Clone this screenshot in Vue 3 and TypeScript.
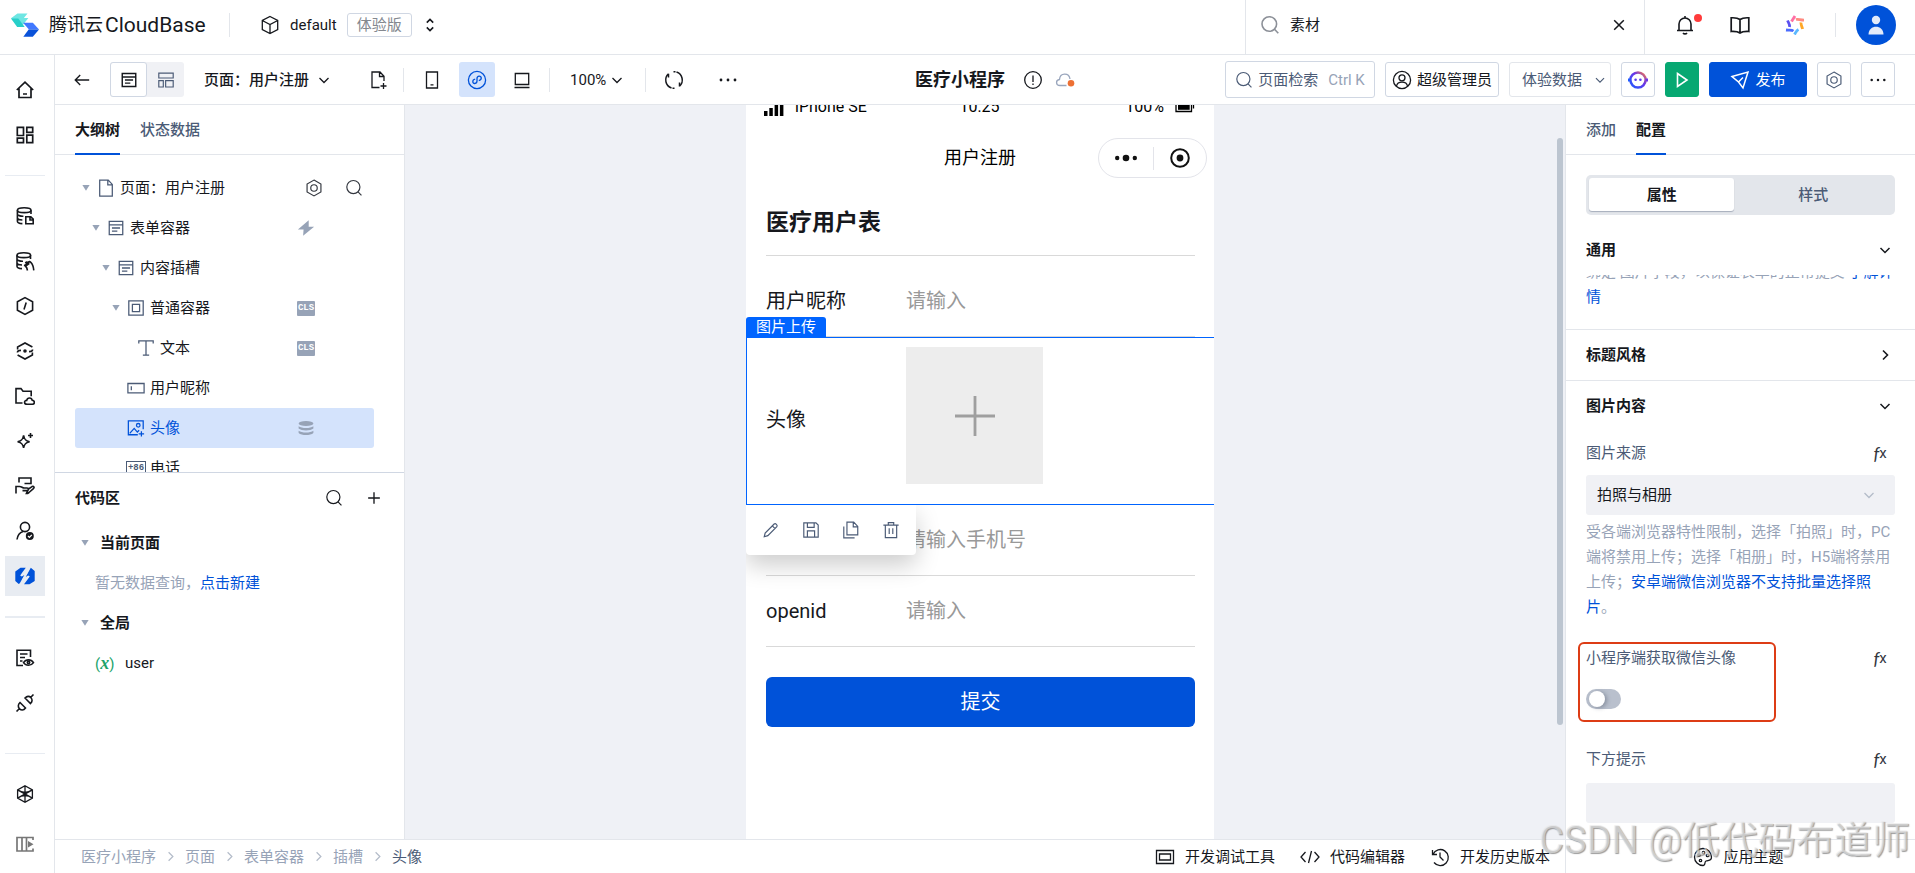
<script setup lang="ts">
import { h, ref } from 'vue'

/* Icon shapes, all drawn in a 20 x 20 box */
const shapes: Record<string, string> = {
  logo: '<g stroke="none"><path d="M4.600 1.800h7.200L9.200 5h3.200L8.600 9.800H4L0 5.200z" fill="#6fe6e3"/><path d="M0 5.400h5.200l4.600 6H4.400z" fill="#27cfc9"/><path d="M8.600 8.400h7l4.400 4.800h-7.200z" fill="#4178ff"/><path d="M20 13.200h-7.400L8.800 18.400h6.800z" fill="#0a52d9"/></g>',
  cube: '<path d="M10 1.500l7.700 4v9L10 18.500l-7.700-4v-9zM2.300 5.500L10 9.600l7.700-4.100M10 9.600v8.900"/>',
  updown: '<path d="M6 7l4-4 4 4M6 13l4 4 4-4"/>',
  home: '<path d="M1.800 10L10 2.200 18.200 10M4 8.500v9h12v-9M8 14h4"/>',
  grid: '<path d="M2.300 2.300h6.200v8.200H2.300zM11.800 2.300h5.900v5h-5.900zM2.300 13.200h6.200v4.500H2.300zM11.800 10.200h5.900v7.500h-5.900z"/>',
  db: '<path d="M16 8V4.200M2.400 4.200v11c0 1.300 2.200 2.300 5 2.400M2.400 8c0 1.300 2.800 2.300 6 2.200M2.400 11.700c0 1.300 2.200 2.200 5 2.300"/><ellipse cx="9.200" cy="4.200" rx="6.800" ry="2.400"/><path d="M10.800 10.800h5l2.400 2.300v4.600h-7.400zM15 11v3h3"/>',
  dbHand: '<path d="M15.500 8V4.200M2 4.200v11c0 1.300 2.200 2.300 5 2.400M2 8c0 1.300 2.800 2.300 6 2.200M2 11.700c0 1.300 2.200 2.200 5 2.300"/><ellipse cx="8.800" cy="4.200" rx="6.800" ry="2.400"/><path d="M12.500 19.500l-.8-2.800-2-2.200c.6-1 1.400-.6 2.600.2M12.800 14.500l-2-3c.8-1 1.600-.3 2.200.5l1.200 1.500M13.500 12c0-2 1.600-1.500 2.300-.6 2.200 2 2.700 4.400 3 8"/>',
  hexSlash: '<path d="M10 1.600l7.600 4.200v8.400L10 18.400l-7.600-4.200V5.800zM11.200 6.600L9 13.400"/>',
  hexFlow: '<path d="M2.600 8.600V6L10 2l7.400 4M17.400 11.400V14L10 18l-7.400-4M17.600 8.400c0 2-1.600 2.200-3.600 2.200M2.400 11.600c0-2 1.600-2.200 3.600-2.200"/><circle cx="10" cy="10" r="1" fill="currentColor"/>',
  folder: '<path d="M7.500 17H1V2.600h5l2 2.600h8.200v5"/><path d="M12 18.300c-3.200 0-3.200-3.800-.3-3.900.6-3.200 5-3.200 5.500-.2 3 .3 2.600 4.100.3 4.100z"/>',
  spark: '<path d="M8.600 4.500c.7 4 2 5.400 6 6.200-4 .8-5.300 2.200-6 6.200-.7-4-2-5.400-6-6.200 4-.8 5.300-2.200 6-6.200zM15.500 2v5M13 4.500h5"/>',
  handCard: '<path d="M4 6.500V2h12v5.500H9.500M1 17.500V10.500h3.500c2.500 0 2.500 1.500 5 1.500H12c2 0 2 2.600 0 2.600H7.500M13.500 13l3.500-2.400c1.800-.8 2.700 1 1.400 2L14 16.500c-.9.700-1.600 1-2.600 1z"/>',
  userCheck: '<circle cx="10" cy="6" r="4.600"/><path d="M2 18.500c.6-4 2.800-7 6-8"/><circle cx="14.800" cy="15" r="4" fill="currentColor" stroke="none"/><path d="M13 15l1.400 1.400 2.400-2.600" stroke="#fff" stroke-width="1.200"/>',
  weda: '<g fill="#0052d9" stroke="none"><path d="M5.500 1.800h5.300L7.600 6 5.200 9.600l1.600 1L9.400 9l-4.600 8.300L3.700 18 .3 15V5.500z"/><path d="M15.800 1.800L19.700 5v10l-5.200 3.200H9l3.200-4.200 2.600-3.600-1.600-1-2.600 1.600z"/></g><path d="M12.800 5.200L7.500 14.600" stroke="#e8ecf2" stroke-width="1.400"/>',
  docEye: '<path d="M8 17.500H2V2.300h13.500V9M5 6h7.500M5 9.500h5M5 13h2.500"/><path d="M8.500 14.600c2.500-3.600 7.500-3.600 10 0-2.500 3.600-7.500 3.600-10 0z"/><circle cx="13.500" cy="14.600" r="1.200"/>',
  plug: '<path d="M1.500 18.500l3-3M5 9.500l5.500 5.500c-2 2.600-4.300 2.400-6 .7s-1.600-4.200.5-6.200zM18.500 1.500l-3 3M10 5l5.500 5.500c2-2 2-4.300.3-6S12 3 10 5z"/>',
  hexNet: '<path d="M10 1.800l7.400 4.100v8.200L10 18.200l-7.400-4.100V5.900zM10 1.800v16.400M2.600 5.900c4.500 3 10.300 3 14.800 0M2.600 14.100c4.500-3 10.300-3 14.800 0M2.600 5.900l14.800 8.200M17.400 5.900L2.600 14.100" stroke-width="1.300"/>',
  collapse: '<path d="M18 6V3.500H2v13.500h16V14.500M7 3.500v13.500M11.500 3.500v13.500"/><path d="M13 7l5.500 3.200-5.500 3.200z" fill="currentColor" stroke="none"/>',
  search: '<circle cx="9.300" cy="9" r="7.300"/><path d="M14.500 14.200l3.800 4"/>',
  close: '<path d="M4 4l12 12M16 4L4 16"/>',
  bell: '<path d="M2 15.500h16M4 15.500V9a6 6 0 0 1 12 0v6.500M10 3V1M8 18c1 1.200 3 1.200 4 0"/>',
  book: '<path d="M10 4.500C8 3 5 2.600 1.200 2.800v13.700c3.800-.2 6.800.2 8.800 1.500 2-1.300 5-1.700 8.800-1.500V2.800C15 2.600 12 3 10 4.500zM10 4.500V18"/>',
  swirl: '<g fill="none" stroke-width="2.800"><path d="M6.500 6.500l3.500-5.500" stroke="#ff6fa5"/><path d="M11 4.600c2-.8 4 .6 8 .6" stroke="#ff8a80"/><path d="M16 7.500c-.3 2.500 1 4 1.600 6.500" stroke="#ffa726"/><path d="M13.500 14.500c-2 1-2.500 2.500-4 5" stroke="#5ab8ff"/><path d="M8.500 16c-2-1.500-4-.6-7.500-1" stroke="#4a6cff"/><path d="M4.500 12c.6-2.500-.8-4-2-6.500" stroke="#5b50f0"/></g>',
  person: '<circle cx="10" cy="5" r="4.200" fill="#e3ebfa" stroke="none"/><path d="M2.500 19.500c0-10.500 15-10.500 15 0z" fill="#e3ebfa" stroke="none"/>',
  back: '<path d="M18 10H3M8 4.500L2.500 10 8 15.500"/>',
  form: '<path d="M2.500 2.700h15v14.600h-15zM2.500 6.600h15M5.500 10h9M5.500 13.500h6"/>',
  layout: '<path d="M2 2.300h16v5.500H2zM2 10.600h5v7.200H2zM9.600 10.600H18v7.200H9.600z"/>',
  down: '<path d="M5.500 8l4.500 4.500L14.500 8"/>',
  right: '<path d="M8 5.500l4.500 4.500L8 14.500"/>',
  pageAdd: '<path d="M10.500 17.500H3V2h8l4 4.200V11M10.500 2v4.500H15M14.500 13v6M11.500 16h6"/>',
  phone: '<path d="M4.500 2h11v16h-11zM8.500 14.800h3"/>',
  mini: '<circle cx="10" cy="10" r="8.600"/><path d="M8.200 9.200c-3.400.6-2.800 4.600-.4 4.300 1.400-.2 2.200-1 2.200-2.500V8.600c0-1.600 1-2.300 2.200-2.400 2.600-.1 3 3.600-.4 4.400"/>',
  laptop: '<path d="M3.300 3.500h13.400v11H3.300zM2.500 17.500h15"/>',
  refresh: '<path d="M7.500 18A8.400 8.400 0 0 1 4.500 3.800M12.500 2A8.400 8.400 0 0 1 15.500 16.200M4.500 7.500V3.800M15.500 12.500v3.900M9.500 1.700h2M8.500 18.300h2" stroke-width="1.500"/>',
  dots: '<g fill="currentColor" stroke="none"><circle cx="3" cy="10" r="1.400"/><circle cx="10" cy="10" r="1.400"/><circle cx="17" cy="10" r="1.400"/></g>',
  info: '<circle cx="10" cy="10" r="8.300"/><path d="M10 5.500v6.500M10 13.500v1.500"/>',
  cloud: '<path d="M11.500 15.500H5c-4.500 0-4.500-5.500-.5-6 .5-7 9.500-7 10.500-.5" stroke="#9aa6bd"/><circle cx="16" cy="13.200" r="3.300" fill="#ed7033" stroke="none"/>',
  account: '<circle cx="10" cy="10" r="8.600"/><circle cx="10" cy="7.800" r="3"/><path d="M4.500 16c1-5.200 10-5.200 11 0"/>',
  robot: '<defs><linearGradient id="rb" x1="0" y1="1" x2="1" y2="0"><stop offset="0" stop-color="#1f5bff"/><stop offset=".6" stop-color="#6a35e8"/><stop offset="1" stop-color="#ff7a45"/></linearGradient></defs><circle cx="10" cy="10" r="7.600" stroke="url(#rb)" stroke-width="2.500"/><path d="M1.200 8.500v3" stroke="#1f5bff" stroke-width="2.400"/><path d="M18.800 8.500v3" stroke="#6a35e8" stroke-width="2.400"/><g fill="#5a3cf0" stroke="none"><circle cx="7.600" cy="9.700" r="1.300"/><circle cx="12.400" cy="9.700" r="1.300"/></g>',
  play: '<path d="M5.500 3.500l9.500 6.500-9.500 6.500z"/>',
  send: '<path d="M2 6.500L18 2l-5 16-4.500-6zM8.500 12L13 7.500"/>',
  hexGear: '<path d="M10 1.200l7.700 4.400v8.800L10 18.800l-7.700-4.400V5.600z"/><circle cx="10" cy="10" r="3.600"/>',
  caret: '<path d="M4 5h12l-6 9.500z" fill="#97a3b7" stroke="none"/>',
  page: '<path d="M3 1.200h9.500L17 6v13H3zM12 1.200v5.300h5"/>',
  bolt: '<path d="M13 1.500L1 11.700h6.300l-.5 7L19 8.700h-6z" fill="#97a3b7" stroke="none"/>',
  box: '<path d="M2 2h16v16H2zM6 6h8v8H6z"/>',
  text: '<path d="M2 5V2h16v3M10 2v16M6.500 18h7"/>',
  input: '<path d="M1 5h18v10.500H1zM4.800 8v4.500"/>',
  image: '<path d="M12 17.500H1.500V2.200h16.500v9.300M3 16l5-5.500 3.500 4 2-2"/><circle cx="12.500" cy="7" r="2"/><path d="M16 13.500v6M13 16.500h6"/>',
  stack: '<g fill="#97a3b7" stroke="none"><ellipse cx="10" cy="5" rx="8.200" ry="2.900"/><path d="M1.800 8c3.300 2.600 13.100 2.600 16.400 0v2.600c-3.300 2.800-13.100 2.800-16.400 0z"/><path d="M1.800 13c3.300 2.600 13.100 2.600 16.400 0v2.600c-3.300 3-13.100 3-16.400 0z"/></g>',
  plus: '<path d="M10 3.500v13M3.500 10h13"/>',
  bigPlus: '<path d="M10 0v20M0 10h20" stroke="#9f9f9f" stroke-width="1.400"/>',
  pencil: '<path d="M2.500 17.500l1-4L13.500 3.300c1.500-1.300 4.200 1.300 3 3L6.500 16.300zM11.500 5.500l3 3"/>',
  save: '<path d="M2 2h13.500L18 4.500V18H2zM6 2v5h7.500V2M6 18v-7h8v7"/>',
  copy: '<path d="M5.500 1.200h7.500l4.500 4.800v9.500h-12zM12.500 1.200v5.300h5M2 6v12.800h12"/>',
  trash: '<path d="M1.500 4.500h17M7 4.500V1.800h6v2.700M3.700 4.500v14h12.600v-14M8 8v6.500M12 8v6.500"/>',
  signal: '<path d="M0 14h3.500v5H0zM5.300 11h3.500v8H5.300zM10.600 7h3.500v12h-3.500zM15.900 3h3.500v16h-3.500z" fill="#000" stroke="none"/>',
  battery: '<path d="M1 4.500h15.500v10H1zM18.500 7.500v4"/><path d="M3 6.300h11.700v6.500H3z" fill="#000" stroke="none"/>',
  menuDots: '<g fill="#111" stroke="none"><circle cx="2" cy="10" r="2"/><circle cx="10" cy="10" r="3"/><circle cx="18" cy="10" r="2"/></g>',
  target: '<circle cx="10" cy="10" r="8.800" stroke-width="2"/><circle cx="10" cy="10" r="3.400" fill="#111" stroke="none"/>',
  console: '<path d="M1.500 3.500h17v13h-17zM4.500 7h11v6h-11z"/>',
  code: '<path d="M5.500 5L1 10l4.500 5M14.500 5l4.500 5-4.500 5M11.500 4l-3 12"/>',
  history: '<path d="M2.500 3v4.500H7M3 7.200A8 8 0 1 1 4 15.500M10 5.500V10l3.500 3.500"/>',
  palette: '<path d="M10 1.500a8.500 8.500 0 1 0 0 17c3 0 1-3.500 3-4.500s5.500.5 5.500-4S14.500 1.500 10 1.500z"/><circle cx="6" cy="8" r="1.200"/><circle cx="10.500" cy="5.500" r="1.200"/><circle cx="14.500" cy="8.500" r="1.200"/><circle cx="7.500" cy="13.500" r="1.200"/>',
}

const Ic = (p: { n: string; s?: number; w?: number }) =>
  h('svg', {
    width: p.s ?? 20,
    height: p.s ?? 20,
    viewBox: '0 0 20 20',
    fill: 'none',
    stroke: 'currentColor',
    'stroke-width': p.w ?? 1.3,
    class: 'ic',
    'aria-hidden': 'true',
    innerHTML: shapes[p.n],
  })
Ic.props = ['n', 's', 'w']

const navMain = [
  { n: 'db', t: '数据库' },
  { n: 'dbHand', t: '数据模型' },
  { n: 'hexSlash', t: '云函数' },
  { n: 'hexFlow', t: '云托管' },
  { n: 'folder', t: '云存储' },
  { n: 'spark', t: 'AI' },
  { n: 'handCard', t: '扩展' },
  { n: 'userCheck', t: '身份认证' },
  { n: 'weda', t: '云开发平台' },
]

interface Node {
  label: string
  icon: string
  depth: number
  caret?: boolean
  mark?: string
}
const tree: Node[] = [
  { label: '页面：用户注册', icon: 'page', depth: 0, caret: true },
  { label: '表单容器', icon: 'form', depth: 1, caret: true, mark: 'bolt' },
  { label: '内容插槽', icon: 'form', depth: 2, caret: true },
  { label: '普通容器', icon: 'box', depth: 3, caret: true, mark: 'cls' },
  { label: '文本', icon: 'text', depth: 4, mark: 'cls' },
  { label: '用户昵称', icon: 'input', depth: 3 },
  { label: '头像', icon: 'image', depth: 3, mark: 'stack' },
  { label: '电话', icon: 'tel', depth: 3 },
]
const selected = ref('头像')
const crumbs = ['医疗小程序', '页面', '表单容器', '插槽', '头像']
const keyword = ref('素材')
const wechatAvatar = ref(false)
</script>

<template>
  <div class="app">
    <header class="top">
      <a class="brand" href="#"><Ic n="logo" :s="28" /><span class="brand-name"><span class="brand-zh">腾讯云</span>CloudBase</span></a>
      <span class="bar brand-bar"></span>
      <button class="env"><Ic n="cube" /><span>default</span><span class="badge">体验版</span><Ic n="updown" :s="16" :w="2" /></button>
      <label class="top-search">
        <Ic n="search" :w="1.6" class="grey" />
        <input v-model="keyword" type="text" aria-label="搜索" />
        <button aria-label="清除"><Ic n="close" :s="16" :w="1.9" /></button>
      </label>
      <div class="top-right">
        <button class="bell" aria-label="消息"><Ic n="bell" :w="1.6" /><i class="dot"></i></button>
        <button aria-label="文档"><Ic n="book" :w="1.7" /></button>
        <button aria-label="AI 助手"><Ic n="swirl" /></button>
        <span class="bar"></span>
        <button class="avatar" aria-label="账号"><Ic n="person" /></button>
      </div>
    </header>

    <div class="main">
      <nav class="side">
        <button aria-label="首页"><Ic n="home" :w="1.7" /></button>
        <button aria-label="应用"><Ic n="grid" :w="1.7" /></button>
        <hr />
        <button v-for="i in navMain" :key="i.n" :class="{ on: i.n === 'weda' }" :aria-label="i.t"><Ic :n="i.n" :w="1.6" /></button>
        <hr class="thick" />
        <button aria-label="日志"><Ic n="docEye" :w="1.6" /></button>
        <button aria-label="连接"><Ic n="plug" :w="1.6" /></button>
        <hr class="far" />
        <button aria-label="资源"><Ic n="hexNet" :w="1.5" /></button>
        <button class="last" aria-label="展开"><Ic n="collapse" :w="1.7" /></button>
      </nav>

      <div class="work">
        <div class="tools">
          <button aria-label="返回"><Ic n="back" :s="18" :w="1.5" /></button>
          <div class="seg-icons">
            <button class="on" aria-label="设计"><Ic n="form" :s="18" :w="1.6" /></button>
            <button aria-label="布局"><Ic n="layout" :s="18" /></button>
          </div>
          <button class="page-name">页面：用户注册<Ic n="down" /></button>
          <button class="add-page" aria-label="新建页面"><Ic n="pageAdd" /></button>
          <span class="bar"></span>
          <div class="devices">
            <button aria-label="手机"><Ic n="phone" /></button>
            <button class="on" aria-label="小程序"><Ic n="mini" /></button>
            <button aria-label="电脑"><Ic n="laptop" /></button>
          </div>
          <span class="bar"></span>
          <div class="zoom">
            <select aria-label="缩放"><option>100%</option></select>
            <Ic n="down" />
          </div>
          <span class="bar"></span>
          <button class="reload" aria-label="刷新"><Ic n="refresh" /></button>
          <button aria-label="更多"><Ic n="dots" /></button>
          <div class="app-title"><h1>医疗小程序</h1><Ic n="info" /><Ic n="cloud" /></div>
          <div class="acts">
            <button class="find"><Ic n="search" :s="18" /><span>页面检索</span><kbd>Ctrl K</kbd></button>
            <button class="role"><Ic n="account" /><span>超级管理员</span></button>
            <div class="data">
              <select aria-label="数据"><option>体验数据</option></select>
              <Ic n="down" :s="18" />
            </div>
            <button class="sq" aria-label="AI"><Ic n="robot" /></button>
            <button class="sq run" aria-label="预览"><Ic n="play" :w="1.6" /></button>
            <button class="pub"><Ic n="send" :w="1.5" /><span>发布</span></button>
            <button class="sq slate" aria-label="设置"><Ic n="hexGear" :s="18" /></button>
            <button class="sq" aria-label="更多操作"><Ic n="dots" :s="18" /></button>
          </div>
        </div>

        <div class="cols">
          <aside class="left">
            <div class="tabs"><button class="on">大纲树</button><button>状态数据</button></div>
            <div class="tree">
              <div v-for="(t, i) in tree" :key="i" class="row" :class="[{ sel: t.label === selected }, 'd' + t.depth]" @click="selected = t.label">
                <span class="tw"><Ic v-if="t.caret" n="caret" :s="12" /></span>
                <span v-if="t.icon === 'tel'" class="tel">+86</span>
                <Ic v-else :n="t.icon" :s="18" :w="1.4" />
                <span class="name">{{ t.label }}</span>
                <span class="mark">
                  <span v-if="t.mark === 'cls'" class="cls">CLS</span>
                  <Ic v-else-if="t.mark" :n="t.mark" :s="18" />
                </span>
                <span v-if="i === 0" class="root-acts">
                  <button aria-label="页面设置"><Ic n="hexGear" :s="18" /></button>
                  <button aria-label="搜索组件"><Ic n="search" :s="18" /></button>
                </span>
              </div>
            </div>
            <section class="codes">
              <div class="codes-head">
                <h2>代码区</h2>
                <button aria-label="搜索代码"><Ic n="search" :s="18" /></button>
                <button aria-label="新建代码"><Ic n="plus" :s="18" :w="1.5" /></button>
              </div>
              <div class="grp"><Ic n="caret" :s="12" /><b>当前页面</b></div>
              <p class="none">暂无数据查询，<a href="#">点击新建</a></p>
              <div class="grp"><Ic n="caret" :s="12" /><b>全局</b></div>
              <div class="var"><i class="vx">(<em>x</em>)</i><span>user</span></div>
            </section>
          </aside>

          <main class="stage">
            <div class="phone">
              <div class="status">
                <span class="carrier"><Ic n="signal" />iPhone SE</span>
                <span>10:25</span>
                <span class="power">100%<Ic n="battery" /></span>
              </div>
              <div class="nav">
                <span>用户注册</span>
                <div class="capsule"><Ic n="menuDots" :s="22" /><i></i><Ic n="target" /></div>
              </div>
              <form class="form" @submit.prevent>
                <h3>医疗用户表</h3>
                <div class="field"><label for="f-nick">用户昵称</label><input id="f-nick" type="text" placeholder="请输入" /></div>
                <div class="upload">
                  <span class="tag">图片上传</span>
                  <span class="up-label">头像</span>
                  <button type="button" class="drop" aria-label="上传头像"><Ic n="bigPlus" :s="40" /></button>
                  <div class="ops">
                    <button type="button" aria-label="编辑"><Ic n="pencil" :s="18" /></button>
                    <button type="button" aria-label="保存"><Ic n="save" :s="18" /></button>
                    <button type="button" aria-label="复制"><Ic n="copy" :s="18" /></button>
                    <button type="button" aria-label="删除"><Ic n="trash" :s="18" /></button>
                  </div>
                </div>
                <div class="field"><input id="f-tel" class="indent" type="tel" aria-label="电话" placeholder="请输入手机号" /></div>
                <div class="field"><label for="f-open">openid</label><input id="f-open" type="text" placeholder="请输入" /></div>
                <button class="submit">提交</button>
              </form>
            </div>
            <span class="thumb"></span>
          </main>

          <aside class="right">
            <div class="tabs"><button>添加</button><button class="on">配置</button></div>
            <div class="switcher"><button class="on">属性</button><button>样式</button></div>
            <button class="sec first">通用<Ic n="down" :w="1.5" /></button>
            <div class="clip">
              <p class="tip">绑定 图片字段，以保证表单的正常提交 <a href="#">了解详情</a></p>
            </div>
            <button class="sec line">标题风格<Ic n="right" :w="1.6" /></button>
            <button class="sec line">图片内容<Ic n="down" :w="1.5" /></button>
            <div class="opt src"><label for="p-src">图片来源</label><button class="fx" aria-label="表达式">f<span>x</span></button></div>
            <div class="pick">
              <select id="p-src"><option>拍照与相册</option></select>
              <Ic n="down" />
            </div>
            <p class="tip help">受各端浏览器特性限制，选择「拍照」时，PC端将禁用上传；选择「相册」时，H5端将禁用上传；<a href="#">安卓端微信浏览器不支持批量选择照片</a>。</p>
            <div class="opt wx">
              <div class="framed">
                <label for="p-wx">小程序端获取微信头像</label>
                <input id="p-wx" v-model="wechatAvatar" type="checkbox" role="switch" />
              </div>
              <button class="fx" aria-label="表达式">f<span>x</span></button>
            </div>
            <div class="opt low"><label for="p-tip">下方提示</label><button class="fx" aria-label="表达式">f<span>x</span></button></div>
            <input id="p-tip" class="text" type="text" />
          </aside>
        </div>

        <footer class="foot">
          <div class="crumbs">
            <template v-for="(c, i) in crumbs" :key="c">
              <Ic v-if="i" n="right" :s="19" /><a href="#" :class="{ cur: i === crumbs.length - 1 }">{{ c }}</a>
            </template>
          </div>
          <div class="foot-acts">
            <button><Ic n="console" />开发调试工具</button>
            <button><Ic n="code" />代码编辑器</button>
            <button><Ic n="history" />开发历史版本</button>
          </div>
          <div class="theme"><button><Ic n="palette" />应用主题</button></div>
        </footer>
      </div>
    </div>
    <div class="wm">CSDN @低代码布道师</div>
  </div>
</template>

<style>
body {
  margin: 0;
}
</style>

<style scoped>
.app {
  height: 100vh;
  display: flex;
  flex-direction: column;
  overflow: hidden;
  position: relative;
  background: #fff;
  color: #16181d;
  font: 15px/20px Roboto, "Noto Sans CJK SC", sans-serif;
}
.app * {
  box-sizing: border-box;
}
.ic {
  flex: none;
  display: block;
}
button,
input,
select {
  font: inherit;
  color: inherit;
  border: 0;
  background: none;
  padding: 0;
  margin: 0;
  outline: 0;
}
button {
  display: flex;
  align-items: center;
  justify-content: center;
  flex: none;
  white-space: nowrap;
}
select {
  appearance: none;
}
a {
  color: #0052d9;
  text-decoration: none;
}
h1,
h2,
h3,
p,
hr {
  margin: 0;
}
.bar {
  width: 1px;
  height: 24px;
  background: #e3e6eb;
  flex: none;
}

/* header */
.top {
  flex: none;
  height: 55px;
  padding-bottom: 5px;
  border-bottom: 1px solid #e3e6eb;
  display: flex;
  align-items: center;
}
.brand {
  display: flex;
  align-items: center;
  gap: 10px;
  width: 219px;
  padding-left: 11px;
  color: #16181d;
}
.brand-name {
  font-size: 21px;
  display: flex;
  align-items: center;
  gap: 2px;
}
.brand-zh {
  font-size: 18px;
}
.brand-bar {
  margin-left: 10px;
}
.env {
  margin-left: 30px;
  gap: 10px;
}
.badge {
  height: 24px;
  padding: 0 9px;
  border: 1px solid #d0d7e3;
  border-radius: 3px;
  color: #84888f;
  display: flex;
  align-items: center;
}
.top-search {
  align-self: stretch;
  margin: 0 0 -5px auto;
  padding: 0 17px 5px 14px;
  width: 400px;
  border: solid #e3e6eb;
  border-width: 0 1px;
  display: flex;
  align-items: center;
  gap: 10px;
}
.top-search input {
  flex: 1;
  min-width: 0;
}
.grey {
  color: #8c9098;
}
.top-right {
  width: 270px;
  padding-right: 19px;
  display: flex;
  align-items: center;
  justify-content: flex-end;
}
.top-right button {
  margin-right: 35px;
}
.top-right .avatar {
  width: 40px;
  height: 40px;
  margin: 0 0 0 20px;
  border-radius: 50%;
  background: #0052d9;
}
.top-right .bar {
  margin-left: -5px;
}
.bell {
  position: relative;
}
.dot {
  position: absolute;
  right: -7px;
  top: -1px;
  width: 8px;
  height: 8px;
  border-radius: 50%;
  background: #ff3b3b;
}

/* navigation */
.main {
  flex: 1;
  min-height: 0;
  display: flex;
}
.side {
  flex: none;
  width: 55px;
  padding: 15px 9px 0 5px;
  border-right: 1px solid #e3e6eb;
}
.side button {
  width: 40px;
  height: 40px;
  margin-bottom: 5px;
}
.side .on {
  background: #e8ecf2;
}
.side hr {
  border: 0;
  height: 1px;
  background: #e8ecf2;
  margin: 20px 0;
}
.side .thick {
  height: 2px;
}
.side .far {
  margin-top: 30px;
}
.side .last {
  margin-top: 10px;
  color: #777;
}
.work {
  flex: 1;
  min-width: 0;
  display: flex;
  flex-direction: column;
}

/* toolbar */
.tools {
  flex: none;
  height: 50px;
  border-bottom: 1px solid #e3e6eb;
  padding: 0 20px 0 18px;
  display: flex;
  align-items: center;
  position: relative;
}
.seg-icons {
  display: flex;
  margin: 0 20px 0 19px;
  background: #f0f1f5;
  border-radius: 3px;
  color: #4b5b76;
}
.seg-icons button {
  width: 37px;
  height: 35px;
}
.seg-icons .on {
  background: #fff;
  border: 1px solid #d0d7e3;
  border-radius: 3px;
  color: #16181d;
}
.page-name {
  font-weight: 500;
  gap: 5px;
}
.add-page {
  margin: 0 14px 0 35px;
}
.devices {
  display: flex;
  gap: 9px;
  margin: 0 9px 0 10px;
}
.devices button {
  width: 36px;
  height: 35px;
}
.devices .on {
  background: #d4e3fc;
  border-radius: 3px;
  color: #0052d9;
}
.zoom {
  width: 57px;
  margin: 0 18px 0 20px;
  display: flex;
  align-items: center;
}
.zoom select {
  width: 37px;
}
.reload {
  margin: 0 34px 0 18px;
}
.app-title {
  position: absolute;
  left: 50%;
  margin-left: -70px;
  display: flex;
  align-items: center;
  gap: 12px;
}
.app-title h1 {
  font-size: 18px;
  line-height: 24px;
  margin-right: 6px;
}
.acts {
  margin-left: auto;
  display: flex;
  align-items: center;
  gap: 10px;
}
.acts > * {
  height: 35px;
  border: 1px solid #d0d7e3;
  border-radius: 3px;
  gap: 5px;
}
.acts .find {
  width: 150px;
  height: 37px;
  color: #4b5b76;
}
kbd {
  font: inherit;
  color: #97a3b7;
  margin-left: 5px;
}
.role {
  width: 114px;
}
.data {
  width: 102px;
  display: flex;
  align-items: center;
  color: #4b5b76;
}
.acts .data {
  border-color: #e3e6eb;
}
.data select {
  width: 64px;
  margin-left: 12px;
}
.sq {
  width: 34px;
}
.acts .run {
  background: #07a872;
  border-color: #07a872;
  color: #fff;
}
.acts .pub {
  width: 98px;
  background: #0052d9;
  border-color: #0052d9;
  color: #fff;
}
.slate {
  color: #4b5b76;
}

/* columns */
.cols {
  flex: 1;
  min-height: 0;
  display: flex;
}
.left {
  flex: none;
  width: 350px;
  border-right: 1px solid #e3e6eb;
  display: flex;
  flex-direction: column;
}
.tabs {
  flex: none;
  height: 50px;
  padding-left: 20px;
  border-bottom: 1px solid #e3e6eb;
  display: flex;
  gap: 20px;
}
.tabs button {
  height: 50px;
  padding-top: 2px;
  border-bottom: 2px solid transparent;
  color: #4b5b76;
  font-weight: 500;
}
.tabs .on {
  color: #16181d;
  font-weight: 700;
  border-color: #0052d9;
}
.tree {
  flex: none;
  height: 318px;
  overflow: hidden;
  padding: 13px 30px 0 20px;
  border-bottom: 1px solid #d0d7e3;
}
.row {
  height: 40px;
  border-radius: 3px;
  display: flex;
  align-items: center;
  position: relative;
  color: #16181d;
}
.row .ic {
  color: #4b5b76;
}
.row.sel,
.row.sel .ic {
  color: #0052d9;
}
.row.sel {
  background: #d4e3fc;
}
.tw {
  width: 12px;
  margin-right: 5px;
  flex: none;
}
.d0 {
  padding-left: 5px;
}
.d1 {
  padding-left: 15px;
}
.d2 {
  padding-left: 25px;
}
.d3 {
  padding-left: 35px;
}
.d4 {
  padding-left: 45px;
}
.row .name {
  margin-left: 5px;
}
.mark {
  margin-left: auto;
  width: 18px;
  margin-right: 59px;
}
.cls {
  display: block;
  width: 18px;
  height: 15px;
  background: #97a3b7;
  border-radius: 1px;
  color: #fff;
  font: 700 9px/15px "Liberation Mono", monospace;
  text-align: center;
}
.tel {
  width: 20px;
  height: 14px;
  margin: 0 -1px;
  border: 1px solid #4b5b76;
  color: #4b5b76;
  font: 700 9px/12px "Liberation Mono", monospace;
  display: flex;
  justify-content: center;
}
.root-acts {
  position: absolute;
  right: 11px;
  display: flex;
  gap: 22px;
}
.root-acts .ic {
  color: #33373f;
}
.codes-head {
  height: 50px;
  padding: 0 21px 0 20px;
  display: flex;
  align-items: center;
  gap: 22px;
}
h2 {
  font-size: 15px;
  margin-right: auto;
}
.grp {
  height: 40px;
  padding-left: 24px;
  display: flex;
  align-items: center;
  gap: 9px;
}
.none {
  line-height: 40px;
  padding-left: 40px;
  color: #97a3b7;
}
.var {
  height: 40px;
  padding-left: 40px;
  display: flex;
  align-items: center;
  gap: 10px;
}
.vx {
  width: 20px;
  color: #20a36b;
  font-style: normal;
}
.vx em {
  font: italic 700 18px/20px "Liberation Serif", serif;
}

/* canvas */
.stage {
  flex: 1;
  min-width: 0;
  background: #eff1f6;
  display: flex;
  justify-content: center;
  padding-right: 10px;
  position: relative;
  overflow: hidden;
}
.thumb {
  position: absolute;
  right: 2px;
  top: 33px;
  width: 6px;
  height: 80%;
  border-radius: 3px;
  background: #bcc5d0;
}
.phone {
  width: 468px;
  background: #fff;
  overflow: hidden;
}
.status {
  height: 22px;
  margin-top: -9px;
  padding: 0 19px 0 18px;
  display: grid;
  grid-template-columns: 1fr auto 1fr;
  align-items: center;
  color: #000;
  font-size: 16px;
}
.carrier,
.power {
  display: flex;
  align-items: center;
  gap: 11px;
}
.power {
  justify-content: flex-end;
}
.nav {
  height: 80px;
  display: flex;
  align-items: center;
  justify-content: center;
  font-size: 18px;
  position: relative;
  color: #000;
}
.capsule {
  position: absolute;
  right: 7px;
  width: 109px;
  height: 40px;
  border: 1px solid #e3e4ea;
  border-radius: 20px;
  display: flex;
  align-items: center;
  justify-content: space-evenly;
  color: #111;
}
.capsule i {
  width: 1px;
  height: 23px;
  background: #e3e4ea;
}
.form {
  padding: 0 19px 0 20px;
  font-size: 20px;
}
h3 {
  height: 58px;
  font-size: 23px;
  line-height: 50px;
  border-bottom: 1px solid #d9d9d9;
  margin-bottom: 10px;
}
.field {
  height: 71px;
  border-bottom: 1px solid #d9d9d9;
  display: flex;
  align-items: center;
}
.field label,
.up-label {
  width: 140px;
  flex: none;
}
.field input {
  flex: 1;
  min-width: 0;
}
.field .indent {
  padding-left: 140px;
}
.field input::placeholder {
  color: #999;
}
.upload {
  height: 168px;
  margin: 0 -19px 0 -20px;
  padding: 9px 0 0 19px;
  border: 1px solid #0064ff;
  border-right: 0;
  position: relative;
  display: flex;
}
.up-label {
  line-height: 146px;
}
.drop {
  width: 137px;
  height: 137px;
  background: #ededed;
}
.tag {
  position: absolute;
  left: -1px;
  top: -21px;
  padding: 0 10px;
  background: #0064ff;
  border-radius: 3px 3px 0 0;
  color: #fff;
  font-size: 15px;
  line-height: 20px;
}
.ops {
  position: absolute;
  left: -1px;
  top: 167px;
  width: 170px;
  height: 50px;
  padding: 0 16px;
  background: #fff;
  border-radius: 0 0 4px 4px;
  box-shadow: 0 10px 24px rgba(0, 0, 0, 0.2);
  display: flex;
  justify-content: space-between;
  color: #4b5b76;
  clip-path: inset(0 -50px -50px -50px);
}
.submit {
  width: 100%;
  height: 50px;
  margin-top: 30px;
  border-radius: 6px;
  background: #0052d9;
  color: #fff;
}

/* settings */
.right {
  flex: none;
  width: 350px;
  border-left: 1px solid #e3e6eb;
  overflow: hidden;
  background: #fff;
}
.switcher {
  height: 40px;
  margin: 20px 20px 0;
  padding: 3px;
  border-radius: 5px;
  background: #e3e6eb;
  display: flex;
}
.switcher button {
  flex: 1;
  color: #4b5b76;
  font-weight: 500;
}
.switcher .on {
  flex: 0 0 48%;
  height: 33px;
  background: #fff;
  border-radius: 3px;
  box-shadow: 0 1px 1px rgba(75, 91, 118, 0.4);
  color: #16181d;
  font-weight: 700;
}
.sec {
  width: 100%;
  height: 51px;
  padding: 0 20px;
  justify-content: space-between;
  font-weight: 700;
}
.sec.line {
  border-top: 1px solid #e3e6eb;
}
.sec.first {
  height: 60px;
  padding-top: 10px;
}
.clip {
  height: 54px;
  overflow: hidden;
  display: flex;
  align-items: flex-end;
  padding: 0 20px 19px;
}
.clip .tip {
  margin: 0;
}
.tip {
  margin: 0 20px;
  line-height: 25px;
  color: #97a3b7;
}
.opt {
  margin: 0 20px;
  display: flex;
  align-items: center;
  justify-content: space-between;
  color: #4b5b76;
}
.src {
  height: 44px;
}
.fx {
  width: 20px;
  margin-right: 5px;
  height: 20px;
  font: italic 18px/20px Lato, sans-serif;
  color: #33373f;
}
.fx span {
  font: 15px/24px Roboto, sans-serif;
}
.pick {
  height: 40px;
  margin: 0 20px 5px;
  padding: 0 16px 0 11px;
  border-radius: 3px;
  background: #f0f1f5;
  display: flex;
  align-items: center;
  color: #b4bcc9;
}
.pick select {
  flex: 1;
  color: #16181d;
}
.help {
  padding-right: 4px;
}
.wx {
  margin-top: 22px;
  margin-left: 12px;
  align-items: flex-start;
}
.wx .fx {
  margin-top: 6px;
}
.framed {
  width: 198px;
  height: 80px;
  border: 2px solid #dd3c15;
  border-radius: 6px;
  padding: 4px 6px;
}
.framed label {
  display: block;
}
.framed input {
  appearance: none;
  display: block;
  width: 35px;
  height: 20px;
  margin-top: 21px;
  padding: 2px 3px;
  border-radius: 10px;
  background: #b9c0cd;
}
.framed input::before {
  content: "";
  display: block;
  width: 16px;
  height: 16px;
  border-radius: 50%;
  background: #fff;
  box-shadow: 2px 1px 4px rgba(60, 70, 90, 0.4);
}
.framed input:checked::before {
  margin-left: auto;
}
.low {
  margin-top: 27px;
}
.text {
  display: block;
  width: calc(100% - 40px);
  height: 40px;
  margin: 14px 20px 0;
  padding: 0 11px;
  border-radius: 3px;
  background: #f0f1f5;
}

/* footer */
.foot {
  flex: none;
  height: 34px;
  border-top: 1px solid #e3e6eb;
  display: flex;
  background: #fff;
}
.crumbs {
  padding-left: 26px;
  display: flex;
  align-items: center;
  gap: 5px;
  color: #b4bcc9;
}
.crumbs a {
  color: #97a3b7;
}
.crumbs .cur {
  color: #4b5b76;
}
.foot-acts {
  margin-left: auto;
  padding-right: 15px;
  display: flex;
  align-items: center;
  gap: 25px;
}
.foot button {
  gap: 10px;
}
.theme {
  width: 350px;
  padding-right: 4px;
  border-left: 1px solid #e3e6eb;
  display: flex;
  align-items: center;
  justify-content: center;
}
.wm {
  position: absolute;
  right: 5px;
  bottom: 9px;
  font-size: 38px;
  line-height: 48px;
  color: rgba(235, 235, 235, 0.6);
  text-shadow: 1px 1px 1px rgba(90, 90, 90, 0.6);
  pointer-events: none;
  white-space: nowrap;
}
</style>
